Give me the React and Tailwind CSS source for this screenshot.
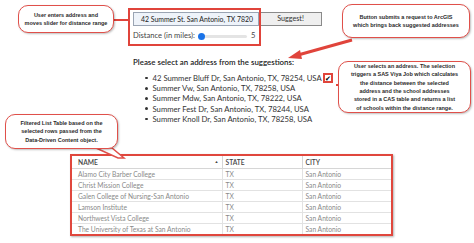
import React from "react";

const schools = [
  "Alamo City Barber College",
  "Christ Mission College",
  "Galen College of Nursing-San Antonio",
  "Lamson Institute",
  "Northwest Vista College",
  "The University of Texas at San Antonio",
];

const suggestions = [
  "42 Summer Bluff Dr, San Antonio, TX, 78254, USA",
  "Summer Vw, San Antonio, TX, 78258, USA",
  "Summer Mdw, San Antonio, TX, 78222, USA",
  "Summer Fest Dr, San Antonio, TX, 78244, USA",
  "Summer Knoll Dr, San Antonio, TX, 78258, USA",
];

const Callout = ({ className, children }) => {
  return (
    <div
      className={
        "absolute flex items-center justify-center rounded-[10px] border-[1.5px] border-[#e0504a] bg-white text-center text-[5.5px] font-bold leading-[8.3px] text-[#2a2a2a] shadow-[1px_1px_2px_rgba(0,0,0,0.25)] " +
        className
      }
      style={{ fontFamily: '"Liberation Sans", Arial, sans-serif' }}
    >
      <div>{children}</div>
    </div>
  );
};

export default function App() {
  return (
    <div
      className="relative h-[243px] w-[474px] overflow-hidden bg-white text-[#333]"
      style={{ fontFamily: 'Lato, "Open Sans", sans-serif' }}
    >
      <div className="pl-[133px] pt-[12px]">
        <div className="flex h-[14px]">
          <div className="flex w-[126px] items-center whitespace-nowrap border border-[#9aa4b3] bg-[#eef3fa] pl-[7px] text-[6.9px] text-[#222]">
            42 Summer St. San Antonio, TX 7820
          </div>
          <div className="flex w-[63px] items-center justify-center border border-[#8a8a8a] bg-[#efefef] text-[7.2px] text-[#333]">
            Suggest!
          </div>
        </div>
        <div className="mt-[4px] flex h-[12px] items-center text-[7.6px] text-[#444]">
          <span>Distance (in miles):</span>
          <div className="relative ml-[4px] flex h-[10px] w-[48px] items-center">
            <div className="h-[3px] w-full rounded-full bg-[#e4e4e4]" />
            <div className="absolute left-[-1px] h-[7px] w-[7px] rounded-full bg-[#1a73e8]" />
          </div>
          <span className="ml-[4px]">5</span>
        </div>

        <h2 className="mt-[14px] whitespace-nowrap text-[7.9px] font-semibold leading-[12px] text-[#222]">
          Please select an address from the suggestions:
        </h2>
        <ul className="mt-[5px] pl-[12px] text-[7.7px] leading-[10.2px] text-[#333]">
          {suggestions.map((s, i) => (
            <li key={s} className="flex items-center whitespace-nowrap">
              <span className="mr-[5px] h-[2.5px] w-[2.5px] rounded-full bg-[#333]" />
              <span>{s}</span>
              {i === 0 && (
                <span className="ml-[1px] flex h-[10px] w-[10px] items-center justify-center border-2 border-[#e0443b] bg-white text-[7px] leading-none text-black">
                  ✔
                </span>
              )}
            </li>
          ))}
        </ul>
      </div>

      <div className="ml-[70px] mt-[30px] w-[323px] border-[2.5px] border-[#e0473d] bg-white shadow-[1px_1px_2px_rgba(0,0,0,0.3)]">
        <table className="w-full border-collapse text-[6.7px]">
          <thead>
            <tr className="h-[12px] border-b border-[#d6d6d6] text-left text-[#444]">
              <th className="w-[150px] pl-[6px] font-semibold">
                <div className="flex items-center justify-between pr-[3px]">
                  <span>NAME</span>
                  <span className="text-[4px]">▲</span>
                </div>
              </th>
              <th className="w-[80px] border-l border-[#d6d6d6] pl-[3px] font-semibold">STATE</th>
              <th className="border-l border-[#d6d6d6] pl-[3px] font-semibold">CITY</th>
            </tr>
          </thead>
          <tbody className="text-[#8a8a8a]">
            {schools.map((s) => (
              <tr key={s} className="h-[10.3px] border-b border-[#e2e2e2] last:border-b-0">
                <td className="pl-[6px]">{s}</td>
                <td className="border-l border-[#e2e2e2] pl-[3px]">TX</td>
                <td className="border-l border-[#e2e2e2] pl-[3px]">San Antonio</td>
              </tr>
            ))}
          </tbody>
        </table>
      </div>

      {/* highlight around the input */}
      <div className="absolute left-[128px] top-[8px] h-[38px] w-[133px] border-[2.5px] border-[#e0443b]" />

      <svg className="absolute left-0 top-0" width="474" height="243" viewBox="0 0 474 243">
        <line x1="113" y1="20" x2="129" y2="20" stroke="#e0443b" strokeWidth="2" />
        <line x1="336" y1="85" x2="339" y2="85" stroke="#e0443b" strokeWidth="2" />
        <line x1="352" y1="40" x2="298" y2="55" stroke="#e0443b" strokeWidth="3" />
        <polygon points="288,58 300,50 302,59" fill="#e0443b" />
        <polygon points="96,148 112,148 124,158 118,158" fill="white" stroke="#e0504a" strokeWidth="1.5" />
      </svg>

      <Callout className="left-[18px] top-[5px] h-[28px] w-[96px]">
        User enters address and
        <br />
        moves slider for distance range
      </Callout>
      <Callout className="left-[342px] top-[4px] h-[34px] w-[128px]">
        Button submits a request to ArcGIS
        <br />
        which brings back suggested addresses
      </Callout>
      <Callout className="left-[338px] top-[61px] h-[52px] w-[133px]">
        User selects an address. The selection
        <br />
        triggers a SAS Viya Job which calculates
        <br />
        the distance between the selected
        <br />
        address and the school addresses
        <br />
        stored in a CAS table and returns a list
        <br />
        of schools within the distance range.
      </Callout>
      <Callout className="left-[5px] top-[114px] h-[35px] w-[113px]">
        Filtered List Table based on the
        <br />
        selected rows passed from the
        <br />
        Data-Driven Content object.
      </Callout>
    </div>
  );
}
